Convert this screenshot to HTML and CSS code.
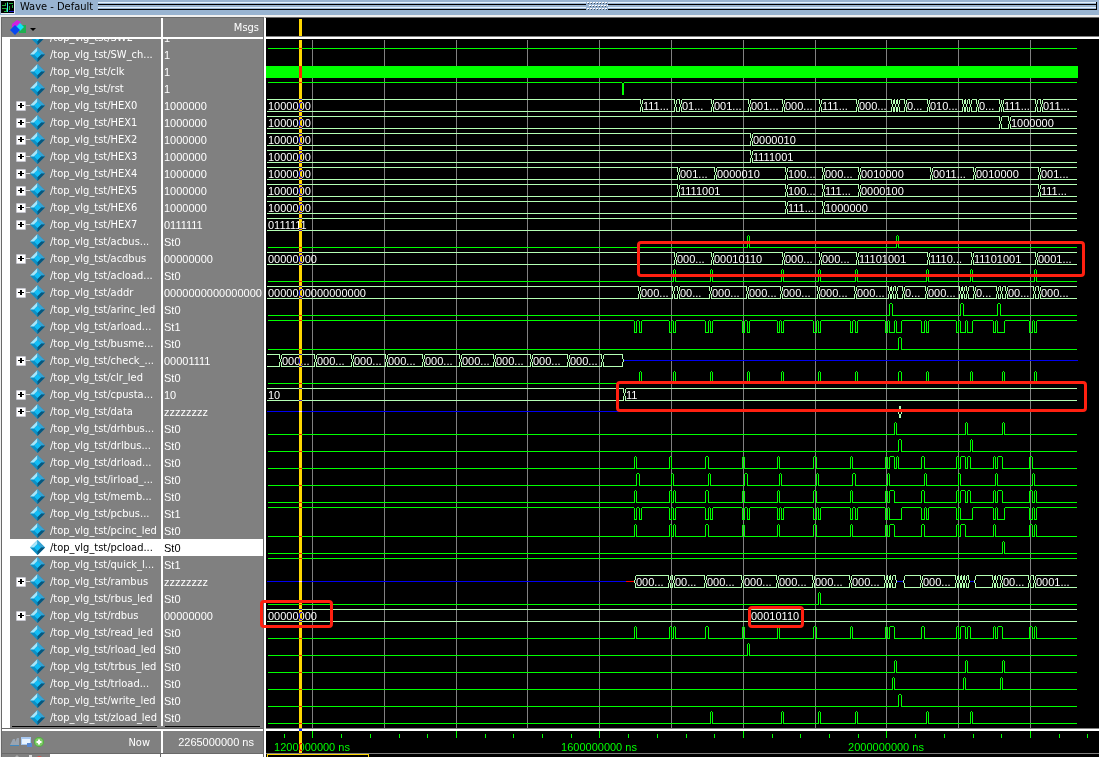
FILE: index.html
```html
<!DOCTYPE html>
<html lang="en">
<head>
    <meta charset="UTF-8">
    <meta name="viewport" content="width=device-width, initial-scale=1.0">
    <title>Wave - Default</title>
    <link rel="stylesheet" href="styles.css">
</head>
<body>
    <div class="window">
        <header class="titlebar">
            <svg class="title-icon" width="14" height="14" viewBox="0 0 14 14" shape-rendering="crispEdges">
                <rect width="14" height="14" fill="#e8f0f8"/>
                <rect y="1" width="13" height="12" fill="#000"/>
                <path d="M1 5.500H4.500V3M6.500 2V6M8 3.500H12M1 8.500H5.500V11.500H3M8.500 6V10M11.500 5V8" stroke="#20b040" fill="none"/>
                <path d="M6.500 3V12" stroke="#40e0f0"/>
                <path d="M8 11.500H13" stroke="#2020d0"/>
            </svg>
            <span class="title">Wave - Default</span>
            <div class="grip">
                <svg class="grip-dots" width="22" height="8" viewBox="0 0 22 8" shape-rendering="crispEdges">
                    <path d="M2 1.500H22M4 4.500H22M2 7.500H22" stroke="#40505f" stroke-dasharray="1 2"/>
                    <path d="M1 .5H22M3 3.500H22M1 6.500H22" stroke="#fff" stroke-dasharray="2 1"/>
                </svg>
            </div>
        </header>

        <main class="main">
            <section class="left">
                <div class="row-head">
                    <div class="cell-name">
                        <button class="tool" aria-label="Signal options">
                            <svg width="22" height="17" viewBox="0 0 22 17">
                                <path d="M2 5L7 1L11 3L7 8H2Z" fill="#d020e0"/>
                                <rect x="9" y="6" width="7" height="8" fill="#20b050"/>
                                <path d="M10 4L14 8L10 12L6 8Z" fill="#10e0f8"/>
                                <path d="M5 6L10 11L5 16L0 11Z" fill="#0848f0"/>
                                <path d="M20 9H26L23 12Z" fill="#000"/>
                            </svg>
                        </button>
                    </div>
                    <div class="cell-value">Msgs</div>
                </div>
                <div class="signals">
                    <table>
                        <tbody id="signals">
                            <!-- rows come from the signals list below -->
                        </tbody>
                    </table>
                    <div class="scroll-lines"><span></span><span></span></div>
                </div>
                <div class="row-foot">
                    <div class="cell-name">
                        <svg width="34" height="12" viewBox="0 0 34 12">
                            <path d="M0 9L3 3H5V6L7 2H9V9Z" fill="#9aa4b0"/>
                            <path d="M0 9.500H9" stroke="#4088c0"/>
                            <rect x="11" y="1" width="10" height="8" fill="#a8c8f0"/>
                            <rect x="12" y="3" width="8" height="5" fill="#e8f4ff"/>
                            <path d="M17 7H22V11H17Z" fill="#5888d0"/>
                            <circle cx="29" cy="6" r="5" fill="#50b040"/>
                            <circle cx="29" cy="6" r="4" fill="#80cc68"/>
                            <path d="M29 3.500V8.500M26.500 6H31.500" stroke="#fff" stroke-width="2"/>
                        </svg>
                        <span>Now</span>
                    </div>
                    <div class="cell-value digits">2265000000 ns</div>
                </div>
                <div class="row-cut">
                    <div class="cut-icons">
                        <svg width="34" height="4" viewBox="0 0 34 4">
                            <path d="M4 4L7 1L10 4Z" fill="#b0b0b0"/>
                            <path d="M19 1H22V4H19Z" fill="#ddd"/>
                            <path d="M26 4Q29 0 33 4Z" fill="#e05048"/>
                        </svg>
                    </div>
                    <div class="cut-name"></div>
                    <div class="cut-value"></div>
                </div>
            </section>

            <section class="wave digits">
                <div class="wave-head"></div>
                <div class="wave-body"><svg id="waves"></svg></div>
                <div class="ruler"><svg id="ruler"></svg></div>
                <div class="cursor-row"><span class="cursor-box"></span></div>
                <div class="cursor cursor-top"></div>
                <div class="cursor cursor-main"></div>
            </section>

            <div class="mark mark-acdbus"></div>
            <div class="mark mark-cpustate"></div>
            <div class="mark mark-rdbus"></div>
            <div class="mark mark-rdbus-value"></div>
        </main>
    </div>

    <script>
        const ROW = 17;
        const LEFT = 266;   // x where the wave pane starts
        const START = 267;
        const END = 1077;

        // machine cycle pulses shared by several control signals
        const fetch = [[634,636],[669,671],[705,708],[742,744],[777,779],[813,816],[850,852]];
        const clear = [[673,675],[710,712],[747,749],[781,783],[818,820],[855,857]];
        const mem = fetch.concat([[673,675],[885,887],[889,894],[921,924],[956,958],[960,965],[967,970],[993,995],[997,1002],[1029,1032],[1034,1036]]);

        // p = pulses, b = bus changes [x, text], high = idle level is 1
        const signals = [
            { n: "SW2", v: "1", high: true, none: true },
            { n: "SW_ch...", v: "1", high: true },
            { n: "clk", v: "1", clock: true },
            { n: "rst", v: "1", high: true, p: [[622,623]] },
            { n: "HEX0", v: "1000000", b: [[266,"1000000"],[641,"111..."],[675,""],[680,"01..."],[712,"001..."],[749,"001..."],[783,"000..."],[820,"111..."],[857,"000..."],[892,""],[895,""],[898,""],[905,"0..."],[928,"010..."],[963,""],[966,""],[970,""],[977,"0..."],[1000,""],[1002,"111..."],[1036,""],[1041,"011..."]] },
            { n: "HEX1", v: "1000000", b: [[266,"1000000"],[1000,""],[1009,"1000000"]] },
            { n: "HEX2", v: "1000000", b: [[266,"1000000"],[751,"0000010"]] },
            { n: "HEX3", v: "1000000", b: [[266,"1000000"],[751,"1111001"]] },
            { n: "HEX4", v: "1000000", b: [[266,"1000000"],[678,"001..."],[715,"0000010"],[786,"100..."],[823,"000..."],[859,"0010000"],[931,"0011..."],[974,"0010000"],[1039,"001..."]] },
            { n: "HEX5", v: "1000000", b: [[266,"1000000"],[678,"1111001"],[786,"100..."],[823,"111..."],[859,"0000100"],[1039,"111..."]] },
            { n: "HEX6", v: "1000000", b: [[266,"1000000"],[786,"111..."],[823,"1000000"]] },
            { n: "HEX7", v: "0111111", b: [[266,"0111111"]] },
            { n: "acbus...", v: "St0", p: [[747,749],[896,898]] },
            { n: "acdbus", v: "00000000", b: [[266,"00000000"],[675,"000..."],[712,"00010110"],[783,"000..."],[820,"000..."],[857,"11101001"],[928,"1110..."],[972,"11101001"],[1036,"0001..."]] },
            { n: "acload...", v: "St0", p: [[673,675],[710,712],[781,783],[818,820],[855,857],[926,928],[970,972],[1034,1036]] },
            { n: "addr", v: "0000000000000000", b: [[266,"0000000000000000"],[639,"000..."],[673,""],[678,"00..."],[710,"000..."],[747,"000..."],[781,"000..."],[818,"000..."],[855,"000..."],[889,""],[892,""],[896,""],[903,"0..."],[926,"000..."],[960,""],[963,""],[967,""],[974,"0..."],[997,""],[1001,""],[1006,"00..."],[1034,""],[1039,"000..."]] },
            { n: "arinc_led", v: "St0", p: [[889,892],[960,963],[997,1000]] },
            { n: "arload...", v: "St1", high: true, p: fetch.concat(clear, [[639,641],[885,887],[889,894],[896,901],[921,924],[926,928],[956,958],[960,965],[967,972],[993,995],[997,1004],[1029,1032],[1034,1036]]) },
            { n: "busme...", v: "St0", p: [[898,901]] },
            { n: "check_...", v: "00001111", b: [[266,""],[280,"000..."],[315,"000..."],[352,"000..."],[386,"000..."],[423,"000..."],[460,"000..."],[494,"000..."],[531,"000..."],[568,"000..."],[602,""],[623,"z"]] },
            { n: "clr_led", v: "St0", p: clear.concat([[639,641],[898,901],[926,928],[970,972],[1002,1004],[1034,1036]]) },
            { n: "cpusta...", v: "10", b: [[266,"10"],[624,"11"]] },
            { n: "data", v: "zzzzzzzz", b: [[266,"z"],[898,""],[901,"z"]] },
            { n: "drhbus...", v: "St0", p: [[894,896],[965,967],[1002,1004]] },
            { n: "drlbus...", v: "St0", p: [[898,901],[970,972]] },
            { n: "drload...", v: "St0", p: fetch.concat([[885,887],[889,894],[896,898],[921,924],[956,958],[960,965],[967,970],[993,995],[997,1002],[1029,1032]]) },
            { n: "irload_...", v: "St0", p: [[636,639],[671,673],[708,710],[744,747],[779,781],[816,818],[852,855],[887,889],[924,926],[958,960],[995,997],[1032,1034]] },
            { n: "memb...", v: "St0", p: mem },
            { n: "pcbus...", v: "St1", high: true, p: fetch.concat(clear, [[639,641],[885,887],[889,901],[921,924],[926,928],[956,958],[960,972],[993,995],[997,1004],[1029,1032],[1034,1036]]) },
            { n: "pcinc_led", v: "St0", p: fetch.concat([[673,675],[885,887],[889,894],[921,924],[956,958],[960,965],[993,995],[1029,1032],[1034,1036]]) },
            { n: "pcload...", v: "St0", selected: true, p: [[1002,1004]] },
            { n: "quick_l...", v: "St1", high: true },
            { n: "rambus", v: "zzzzzzzz", b: [[266,"z"],[625,"x"],[634,"000..."],[669,""],[673,"00..."],[705,"000..."],[742,"000..."],[777,"000..."],[813,"000..."],[850,"000..."],[885,""],[888,""],[891,""],[896,"z"],[903,""],[921,"000..."],[956,""],[959,""],[962,""],[965,""],[969,"z"],[974,""],[993,""],[996,""],[1001,"00..."],[1029,""],[1034,"0001..."]] },
            { n: "rbus_led", v: "St0", p: [[818,820]] },
            { n: "rdbus", v: "00000000", b: [[266,"00000000"],[749,"00010110"]] },
            { n: "read_led", v: "St0", p: mem },
            { n: "rload_led", v: "St0", p: [[747,749]] },
            { n: "trbus_led", v: "St0", p: [[894,896],[965,967],[1002,1004]] },
            { n: "trload...", v: "St0", p: [[892,894],[963,965],[1000,1002]] },
            { n: "write_led", v: "St0", p: [[898,901]] },
            { n: "zload_led", v: "St0", p: [[710,712],[781,783],[818,820],[855,857],[926,928],[970,972]] }
        ];

        const gem = `
            <svg class="gem" width="15" height="15" viewBox="0 0 15 15">
                <path d="M7.500 0L15 7.500L7.500 15L0 7.500Z" fill="#0d8fc4"/>
                <path d="M7.500 0L0 7.500H4L7.500 4Z" fill="#a8e6fa"/>
                <path d="M7.500 0L15 7.500H11L7.500 4Z" fill="#38a4d4"/>
                <path d="M15 7.500L7.500 15V11L11 7.500Z" fill="#08567c"/>
                <path d="M7.500 4L11 7.500L7.500 11L4 7.500Z" fill="#12bdf5"/>
            </svg>`;

        function loadSignals() {
            document.getElementById("signals").innerHTML = signals.map(s => `
                <tr class="${s.selected ? "selected" : ""}">
                    <td class="name"><div class="name-in">
                        ${s.b ? `<button class="expand" aria-label="Expand ${s.n}"></button><i class="branch"></i>` : ""}
                        ${gem}<span>/top_vlg_tst/${s.n}</span>
                    </div></td>
                    <td class="value digits">${s.v}</td>
                </tr>`).join("");
        }

        function pulsePath(s, mid) {
            const idle = s.high ? mid - 6 : mid + 6;
            const act = s.high ? mid + 6 : mid - 6;
            const near = s.high ? idle + 1 : act + 1;
            const pulses = (s.p || []).slice().sort((a, b) => a[0] - b[0]);
            let d = `M${START} ${idle}`;
            pulses.forEach(([a, b]) => {
                if (s.high) {
                    d += `H${a - 1}L${a} ${near}V${act}H${b}V${near}L${b + 1} ${idle}`;
                } else {
                    d += `H${a}V${near}L${a + 1} ${act}H${b - 1}L${b} ${near}V${idle}`;
                }
            });
            return `<path class="logic" d="${d}H${END - 1}"/>`;
        }

        function busPath(s, mid) {
            const top = mid - 6, bot = mid + 6;
            let d = "", out = "";
            s.b.forEach(([x, label], i) => {
                const next = i + 1 < s.b.length ? s.b[i + 1][0] : END;
                const last = i + 1 === s.b.length;
                if (label === "z" || label === "x") {
                    out += `<path class="level-${label}" d="M${x} ${mid}H${next}"/>`;
                    return;
                }
                // short burst on a floating bus
                if (next - x < 4 && i && s.b[i - 1][1] === "z") {
                    d += `M${x} ${mid - 2}V${mid + 2}M${x + 1} ${top}V${mid - 2}M${x + 2} ${top}V${mid - 2}M${x + 1} ${mid + 2}V${bot}M${x + 2} ${mid + 2}V${bot}M${next} ${mid - 2}V${mid + 2}`;
                    return;
                }
                const l = i ? x + 1 : x;
                const r = next - 1;
                d += `M${l} ${top}H${r}M${l} ${bot}H${r}`;
                if (i) d += `M${l} ${top}V${top + 4}L${x} ${top + 5}V${bot - 5}L${l} ${bot - 4}V${bot}`;
                if (!last) d += `M${r} ${top}V${top + 4}L${next} ${top + 5}V${bot - 5}L${r} ${bot - 4}V${bot}`;
            });
            return out + `<path class="bus" d="${d}"/>`;
        }

        function drawWaves() {
            let grid = "", lines = "", labels = "";
            const gridX = [312, 384, 456, 527, 599, 671, 743, 815, 886, 958, 1030];
            gridX.forEach(x => grid += `<path class="grid" d="M${x} 0V690"/>`);
            signals.forEach((s, i) => {
                const mid = i * ROW - 2;
                if (s.none) return;
                if (s.clock) {
                    lines += `<path class="clock" d="M${LEFT - 1} ${mid}H${END}"/>`;
                } else if (s.b) {
                    lines += busPath(s, mid);
                    s.b.forEach(([x, label]) => {
                        if (label && label !== "z" && label !== "x") {
                            labels += `<text x="${x + 2}" y="${mid + 5}">${label}</text>`;
                        }
                    });
                } else {
                    lines += pulsePath(s, mid);
                }
            });
            document.getElementById("waves").innerHTML =
                `<g transform="translate(${0.5 - LEFT} 0.5)">${grid}${lines}</g><g transform="translate(${-LEFT} 0)">${labels}</g>`;
        }

        function drawRuler() {
            let ticks = "";
            for (let i = -1; i < 28; i++) {
                const x = Math.round(312.400 + i * 28.700);
                ticks += i % 5 === 0 ? `M${x} 0V7` : `M${x} 3V7`;
            }
            document.getElementById("ruler").innerHTML = `
                <g transform="translate(${0.5 - LEFT} 0)"><path class="logic" d="${ticks}"/></g>
                <g transform="translate(${-LEFT} 0)">
                    <text x="312" y="20">1200000000 ns</text>
                    <text x="599" y="20">1600000000 ns</text>
                    <text x="886" y="20">2000000000 ns</text>
                </g>`;
        }

        loadSignals();
        drawWaves();
        drawRuler();
    </script>
</body>
</html>
```
FILE: styles.css
```css
* {
    box-sizing: border-box;
}

body {
    margin: 0;
    background: #fff;
    font-family: Tahoma, "DejaVu Sans Condensed", "Liberation Sans", sans-serif;
    font-size: 11px;
    line-height: 17px;
    overflow: hidden;
}

button {
    padding: 0;
    border: 0;
    background: none;
}

svg {
    display: block;
}

.digits {
    font-family: Tahoma, "Liberation Sans", sans-serif;
}

.window {
    min-height: 100vh;
    display: flex;
    flex-direction: column;
}

/* title bar */
.titlebar {
    display: flex;
    height: 15px;
    padding: 0 2px 0 1px;
    background: #99b4d1;
    color: #000;
}

.title {
    margin: -2px 5px 0;
    white-space: nowrap;
}

.grip {
    flex: 1;
    height: 8px;
    margin-top: 2px;
    display: flex;
    justify-content: center;
    border-right: 1px solid #000;
    background: linear-gradient(#e4f2fc 0 1px, #99b4d1 1px 2px, #000 2px 3px, #99b4d1 3px 5px, #e4f2fc 5px 6px, #99b4d1 6px 7px, #000 7px 8px);
}

.grip-dots {
    background: #99b4d1;
}

/* panes */
.main {
    position: relative;
    flex: 1;
    display: flex;
    border-top: 2px solid #f0f0f0;
    border-left: 1px solid #f0f0f0;
}

.left {
    display: flex;
    flex-direction: column;
    flex: none;
    width: 263px;
    border-top: 1px solid #696969;
    border-left: 1px solid #696969;
    border-right: 1px solid #696969;
    background: #808080;
    color: #fff;
}

.row-head,
.row-foot,
.row-cut {
    display: flex;
}

.row-head {
    height: 21px;
    border-bottom: 2px solid #fff;
}

.row-foot {
    height: 25px;
    border-top: 2px solid #fff;
    border-bottom: 1px solid #696969;
}

.cell-name {
    display: flex;
    align-items: center;
    justify-content: space-between;
    width: 161px;
    padding: 0 11px 0 8px;
    border-right: 2px solid #fff;
}

.cell-value {
    display: flex;
    align-items: center;
    justify-content: flex-end;
    flex: 1;
    padding-right: 9px;
}

.row-head .cell-value {
    padding-right: 4px;
}

.tool svg {
    overflow: visible;
}

.row-cut {
    flex: 1;
    min-height: 3px;
    background: #fff;
}

.cut-icons {
    width: 48px;
    height: 4px;
    padding-left: 8px;
    background: #808080;
}

.cut-name {
    width: 111px;
    border-right: 1px solid #696969;
}

/* signal list, scrolled a little past its first row */
.signals {
    overflow: hidden;
    border-bottom: 1px solid #696969;
}

.signals table {
    width: 100%;
    margin-top: -10px;
    border-spacing: 0;
    table-layout: fixed;
}

.signals td {
    height: 17px;
    padding: 0;
    line-height: 16px;
    white-space: nowrap;
}

.signals .name {
    width: 161px;
    border-left: 8px solid #fff;
    border-right: 2px solid #fff;
}

.name-in {
    display: flex;
    align-items: center;
    justify-content: flex-end;
    width: 147px;
    height: 17px;
}

.name-in span {
    width: 107px;
}

.gem {
    margin-right: 5px;
}

.signals .value {
    padding-left: 1px;
}

.selected {
    background: #fff;
    color: #000;
}

.expand {
    width: 10px;
    height: 10px;
    border: 1px solid #c8c8d0;
    border-radius: 1px;
    background:
        linear-gradient(#000, #000) center / 6px 1px no-repeat,
        linear-gradient(#000, #000) center / 2px 5px no-repeat,
        #fff;
}

.branch {
    width: 4px;
    height: 1px;
    background: #d8d8d8;
}

.scroll-lines {
    display: flex;
    height: 2px;
    border-left: 8px solid #fff;
}

.scroll-lines span {
    height: 1px;
    width: 145px;
    margin-left: 2px;
    background: #000;
}

.scroll-lines span + span {
    width: 95px;
    margin-left: 8px;
}

/* wave pane */
.wave {
    position: relative;
    flex: 1;
    min-width: 0;
    display: flex;
    flex-direction: column;
    border-top: 1px solid #696969;
    border-left: 2px solid #fff;
    background: #000;
}

.wave-head {
    height: 21px;
    border-bottom: 2px solid #fff;
    box-shadow: inset 0 -1px #808080;
}

.wave-body {
    height: 690px;
    border-bottom: 1px solid #808080;
}

.wave svg {
    width: 100%;
    height: 100%;
}

.wave path {
    fill: none;
    stroke-width: 1px;
    shape-rendering: crispEdges;
}

.wave .grid {
    stroke: #808080;
}

.wave .logic {
    stroke: #0f0;
}

.wave .bus {
    stroke: #b4ffb4;
}

.wave .clock {
    stroke: #0f0;
    stroke-width: 12px;
}

.wave .level-z {
    stroke: #0000f0;
}

.wave .level-x {
    stroke: #f00;
}

.wave text {
    fill: #fff;
}

.ruler {
    height: 25px;
    border-top: 2px solid #fff;
    border-bottom: 1px solid #808080;
}

.wave .ruler text {
    fill: #0f0;
    text-anchor: middle;
}

.cursor-row {
    flex: 1;
    min-height: 3px;
}

.cursor-box {
    display: block;
    width: 102px;
    height: 3px;
    margin-left: 1px;
    border: 1px solid #ffd700;
    border-bottom: 0;
}

/* time cursor, inverts whatever it crosses */
.cursor {
    position: absolute;
    left: 33px;
    width: 3px;
    background: #ffd700;
    mix-blend-mode: difference;
}

.cursor-top {
    top: 1px;
    height: 17px;
}

.cursor-main {
    top: 22px;
    bottom: 4px;
}

/* red frames around the values of interest */
.mark {
    position: absolute;
    border: 3px solid #ff2010;
    border-radius: 4px;
}

.mark-acdbus {
    left: 636px;
    top: 224px;
    width: 448px;
    height: 36px;
}

.mark-cpustate {
    left: 615px;
    top: 364px;
    width: 471px;
    height: 31px;
}

.mark-rdbus {
    left: 259px;
    top: 583px;
    width: 73px;
    height: 28px;
}

.mark-rdbus-value {
    left: 747px;
    top: 589px;
    width: 56px;
    height: 22px;
}
```
